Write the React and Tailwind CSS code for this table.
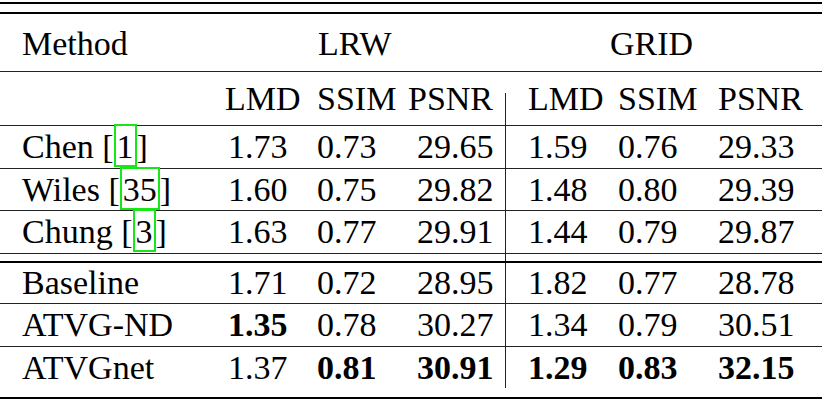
import React from 'react';

const Cite = ({ n }) => (
  <span className="inline-flex items-center">
    [
    <span className="inline-block border-2 border-[#19e619] leading-none px-[1px] pt-[4px] pb-[1px] -mt-[3px]">{n}</span>
    ]
  </span>
);

const rows = [
  { name: <>Chen <Cite n="1" /></>, v: ['1.73', '0.73', '29.65', '1.59', '0.76', '29.33'], h: 'h-[42px]' },
  { name: <>Wiles <Cite n="35" /></>, v: ['1.60', '0.75', '29.82', '1.48', '0.80', '29.39'], h: 'h-[41px]' },
  { name: <>Chung <Cite n="3" /></>, v: ['1.63', '0.77', '29.91', '1.44', '0.79', '29.87'], h: 'h-[42px]' },
];

const rows2 = [
  { name: 'Baseline', v: ['1.71', '0.72', '28.95', '1.82', '0.77', '28.78'], b: [], h: 'h-[40px]' },
  { name: 'ATVG-ND', v: ['1.35', '0.78', '30.27', '1.34', '0.79', '30.51'], b: [0], h: 'h-[42px]' },
  { name: 'ATVGnet', v: ['1.37', '0.81', '30.91', '1.29', '0.83', '32.15'], b: [1, 2, 3, 4, 5], h: 'h-[50px] pb-[9px]' },
];

const Line = ({ className = 'h-px bg-[#222]' }) => <div className={`w-[822px] ${className}`} />;

const DataRow = ({ r }) => {
  const b = (i) => (r.b && r.b.includes(i) ? 'font-bold' : '');
  return (
    <div className={`flex items-center ${r.h}`}>
      <div className="w-[225px] pl-[22px] whitespace-nowrap">{r.name}</div>
      <div className={`w-[92px] pl-[3px] ${b(0)}`}>{r.v[0]}</div>
      <div className={`w-[91px] ${b(1)}`}>{r.v[1]}</div>
      <div className={`w-[97px] pl-[9px] ${b(2)}`}>{r.v[2]}</div>
      <div className={`w-[113px] self-stretch flex items-center border-l border-[#222] pl-[22px] ${b(3)}`}>{r.v[3]}</div>
      <div className={`w-[100px] ${b(4)}`}>{r.v[4]}</div>
      <div className={`w-[104px] ${b(5)}`}>{r.v[5]}</div>
    </div>
  );
};

export default function App() {
  return (
    <div className="w-[825px] h-[401px] bg-white text-black font-['Liberation_Serif'] text-[34px] leading-none overflow-hidden">
      <div className="pt-[2px]">
        <Line className="h-[2px] bg-black" />
        <div className="h-[8px]" />
        <Line className="h-[2px] bg-black" />
        <div className="flex items-center h-[57px] pt-[3px]">
          <div className="w-[318px] pl-[22px]">Method</div>
          <div className="w-[292px]">LRW</div>
          <div>GRID</div>
        </div>
        <Line />
        <div className="flex h-[53px]">
          <div className="w-[225px]" />
          <div className="w-[92px] flex items-center">LMD</div>
          <div className="w-[91px] flex items-center">SSIM</div>
          <div className="w-[97px] flex items-center">PSNR</div>
          <div className="w-[113px] flex">
            <div className="flex flex-col">
              <div className="h-[21px]" />
              <div className="flex-1 border-l border-[#222]" />
            </div>
            <div className="flex items-center pl-[22px]">LMD</div>
          </div>
          <div className="w-[100px] flex items-center">SSIM</div>
          <div className="w-[104px] flex items-center">PSNR</div>
        </div>
        <Line />
        {rows.map((r, i) => (
          <React.Fragment key={i}>
            <DataRow r={r} />
            <Line />
          </React.Fragment>
        ))}
        <div className="flex h-[7px]">
          <div className="w-[505px]" />
          <div className="border-l border-[#222]" />
        </div>
        <Line className="h-[2px] bg-black" />
        {rows2.map((r, i) => (
          <React.Fragment key={i}>
            <DataRow r={r} />
            {i < 2 && <Line />}
          </React.Fragment>
        ))}
        <Line className="h-[2px] bg-black" />
      </div>
    </div>
  );
}
